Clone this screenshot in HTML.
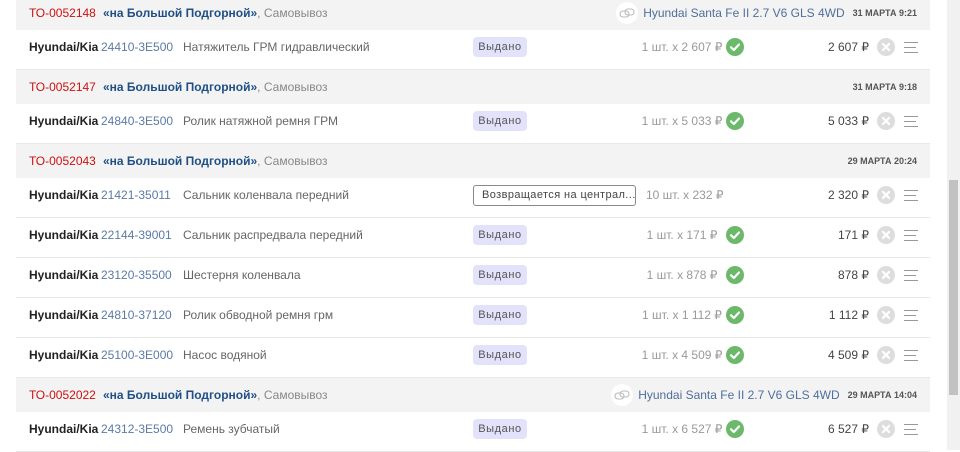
<!DOCTYPE html>
<html><head><meta charset="utf-8"><style>
*{margin:0;padding:0;box-sizing:border-box}
body{width:960px;height:450px;overflow:hidden;background:#fff;font-family:"Liberation Sans",Arial,sans-serif;font-size:12px;position:relative}
#wrap{position:absolute;left:16px;top:-4px;width:914px}
.h{position:relative;height:34px;background:#f3f3f3}
.i{position:relative;height:40px;background:#fff;border-bottom:1px solid #e8e8e8}
.h>*,.i>*{position:absolute;white-space:nowrap}
.t{top:9px;line-height:16px}
.no{left:13px;color:#cc1111}
.pt{left:87px;color:#555}
.pt b{color:#1f4f85}
.pt span{color:#888}
.rt{right:13px;top:8px;height:18px;display:flex;align-items:center}
.car{display:flex;align-items:center;color:#4f6f9c;margin-right:8px}
.ci{width:22px;height:22px;border-radius:50%;background:#fff;margin-right:5px;display:flex;align-items:center;justify-content:center}
.dt{font-size:9px;font-weight:bold;color:#555}
.br{left:13px;color:#222;font-weight:bold}
.pn{left:85px;color:#5b7aa6}
.nm{left:167px;color:#666}
.bd{left:457px;top:7px;width:54px;height:20px;border-radius:4px;background:#e2e2fb;color:#555;font-size:11px;letter-spacing:.6px;line-height:20px;text-align:center}
.bd2{left:457px;top:7px;width:163px;height:21px;border-radius:3px;border:1px solid #888;background:#fff;color:#444;font-size:11px;letter-spacing:.4px;line-height:19px;padding-left:8px;overflow:hidden}
.q{left:616px;width:100px;margin-left:0;text-align:center;color:#999}
.ck{left:710px;top:8px;width:18px;height:18px;border-radius:50%;background:#6cb96c}
.pr{right:61px;color:#444}
.x{left:861px;top:8px;width:18px;height:18px;border-radius:50%;background:#ddd}
.m{left:888px;top:12px;width:14px;height:11px;border-top:1px solid #999;border-bottom:1px solid #999}
.m:after{content:"";position:absolute;left:0;right:2px;top:4px;border-top:1px solid #999}
#sb{position:absolute;left:947px;top:0;width:13px;height:450px;background:#f1f1f1}
#th{position:absolute;left:949px;top:180px;width:9px;height:215px;background:#c1c1c1}
</style></head><body>
<svg width="0" height="0" style="position:absolute"><defs>
<symbol id="c" viewBox="0 0 18 18"><path d="M5 9.3l2.8 2.7L13 6.5" fill="none" stroke="#fff" stroke-width="2.2" stroke-linecap="round" stroke-linejoin="round"/></symbol>
<symbol id="xx" viewBox="0 0 18 18"><path d="M6 6l6 6M12 6l-6 6" stroke="#fff" stroke-width="2.2" stroke-linecap="round"/></symbol>
<symbol id="lk" viewBox="0 0 16 12"><rect x="1" y="4" width="9" height="6" rx="3" fill="none" stroke="#bbb" stroke-width="1.1"/><rect x="6" y="2" width="9" height="6" rx="3" fill="none" stroke="#bbb" stroke-width="1.1"/></symbol>
</defs></svg>
<div id="wrap">
<div class="h"><div class="t no">ТО-0052148</div><div class="t pt"><b>«на Большой Подгорной»</b><span>, Самовывоз</span></div><div class="rt"><div class="car"><div class="ci"><svg width="16" height="12"><use href="#lk"/></svg></div>Hyundai Santa Fe II 2.7 V6 GLS 4WD</div><div class="dt">31 МАРТА 9:21</div></div></div>
<div class="i"><div class="t br">Hyundai/Kia</div><div class="t pn">24410-3E500</div><div class="t nm">Натяжитель ГРМ гидравлический</div><div class="bd">Выдано</div><div class="t q">1 шт. x 2 607 ₽</div><svg class="ck" viewBox="0 0 18 18"><use href="#c"/></svg><div class="t pr">2 607 ₽</div><svg class="x" viewBox="0 0 18 18"><use href="#xx"/></svg><div class="m"></div></div>
<div class="h"><div class="t no">ТО-0052147</div><div class="t pt"><b>«на Большой Подгорной»</b><span>, Самовывоз</span></div><div class="rt"><div class="dt">31 МАРТА 9:18</div></div></div>
<div class="i"><div class="t br">Hyundai/Kia</div><div class="t pn">24840-3E500</div><div class="t nm">Ролик натяжной ремня ГРМ</div><div class="bd">Выдано</div><div class="t q">1 шт. x 5 033 ₽</div><svg class="ck" viewBox="0 0 18 18"><use href="#c"/></svg><div class="t pr">5 033 ₽</div><svg class="x" viewBox="0 0 18 18"><use href="#xx"/></svg><div class="m"></div></div>
<div class="h"><div class="t no">ТО-0052043</div><div class="t pt"><b>«на Большой Подгорной»</b><span>, Самовывоз</span></div><div class="rt"><div class="dt">29 МАРТА 20:24</div></div></div>
<div class="i"><div class="t br">Hyundai/Kia</div><div class="t pn">21421-35011</div><div class="t nm">Сальник коленвала передний</div><div class="bd2">Возвращается на централ...</div><div class="t" style="left:630px;color:#999">10 шт. x 232 ₽</div><div class="t pr">2 320 ₽</div><svg class="x" viewBox="0 0 18 18"><use href="#xx"/></svg><div class="m"></div></div>
<div class="i"><div class="t br">Hyundai/Kia</div><div class="t pn">22144-39001</div><div class="t nm">Сальник распредвала передний</div><div class="bd">Выдано</div><div class="t q">1 шт. x 171 ₽</div><svg class="ck" viewBox="0 0 18 18"><use href="#c"/></svg><div class="t pr">171 ₽</div><svg class="x" viewBox="0 0 18 18"><use href="#xx"/></svg><div class="m"></div></div>
<div class="i"><div class="t br">Hyundai/Kia</div><div class="t pn">23120-35500</div><div class="t nm">Шестерня коленвала</div><div class="bd">Выдано</div><div class="t q">1 шт. x 878 ₽</div><svg class="ck" viewBox="0 0 18 18"><use href="#c"/></svg><div class="t pr">878 ₽</div><svg class="x" viewBox="0 0 18 18"><use href="#xx"/></svg><div class="m"></div></div>
<div class="i"><div class="t br">Hyundai/Kia</div><div class="t pn">24810-37120</div><div class="t nm">Ролик обводной ремня грм</div><div class="bd">Выдано</div><div class="t q">1 шт. x 1 112 ₽</div><svg class="ck" viewBox="0 0 18 18"><use href="#c"/></svg><div class="t pr">1 112 ₽</div><svg class="x" viewBox="0 0 18 18"><use href="#xx"/></svg><div class="m"></div></div>
<div class="i"><div class="t br">Hyundai/Kia</div><div class="t pn">25100-3E000</div><div class="t nm">Насос водяной</div><div class="bd">Выдано</div><div class="t q">1 шт. x 4 509 ₽</div><svg class="ck" viewBox="0 0 18 18"><use href="#c"/></svg><div class="t pr">4 509 ₽</div><svg class="x" viewBox="0 0 18 18"><use href="#xx"/></svg><div class="m"></div></div>
<div class="h"><div class="t no">ТО-0052022</div><div class="t pt"><b>«на Большой Подгорной»</b><span>, Самовывоз</span></div><div class="rt"><div class="car"><div class="ci"><svg width="16" height="12"><use href="#lk"/></svg></div>Hyundai Santa Fe II 2.7 V6 GLS 4WD</div><div class="dt">29 МАРТА 14:04</div></div></div>
<div class="i"><div class="t br">Hyundai/Kia</div><div class="t pn">24312-3E500</div><div class="t nm">Ремень зубчатый</div><div class="bd">Выдано</div><div class="t q">1 шт. x 6 527 ₽</div><svg class="ck" viewBox="0 0 18 18"><use href="#c"/></svg><div class="t pr">6 527 ₽</div><svg class="x" viewBox="0 0 18 18"><use href="#xx"/></svg><div class="m"></div></div>
</div>
<div id="sb"></div><div id="th"></div>
</body></html>
